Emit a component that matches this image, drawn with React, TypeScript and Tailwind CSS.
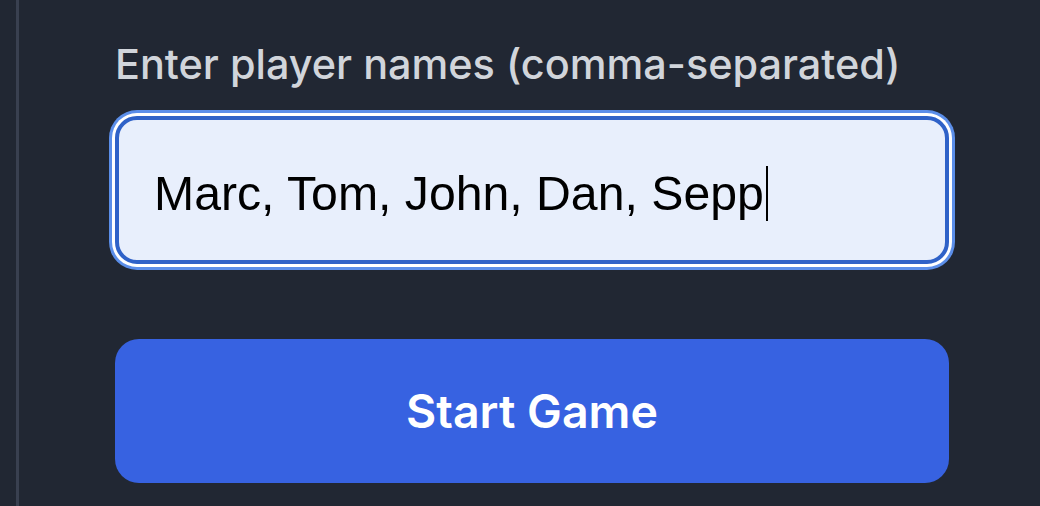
export default function App() {
  return (
    <div className="flex h-[506px] w-[1040px] bg-[#212733] overflow-hidden" style={{ fontFamily: 'Inter, "Noto Sans", sans-serif' }}>
      <div className="ml-[16px] w-[3px] h-full bg-[#394050]" />
      <div className="ml-[96px] w-[834px] pt-[40px] flex flex-col">
        <label className="text-[41.4px] leading-[48px] font-medium text-[#d1d5db]">
          Enter player names (comma-separated)
        </label>
        <div className="mt-[28px] h-[148px] rounded-[22px] border-[4px] border-[#2f62c8] bg-[#e8effc] ring-[3px] ring-[#5b8ee9] ring-offset-[3px] ring-offset-white flex items-center pl-[35px] pt-[6px]">
          <span className="text-[48.2px] leading-[55px] text-black font-['Liberation_Sans',Arial,sans-serif]">Marc, Tom, John, Dan, Sepp</span>
          <span className="ml-[2px] w-[2px] h-[55px] bg-black" />
        </div>
        <button className="mt-[75px] h-[144px] w-full rounded-[24px] bg-[#3762e1] text-white text-[46.5px] font-semibold leading-[56px]">
          Start Game
        </button>
      </div>
    </div>
  );
}
